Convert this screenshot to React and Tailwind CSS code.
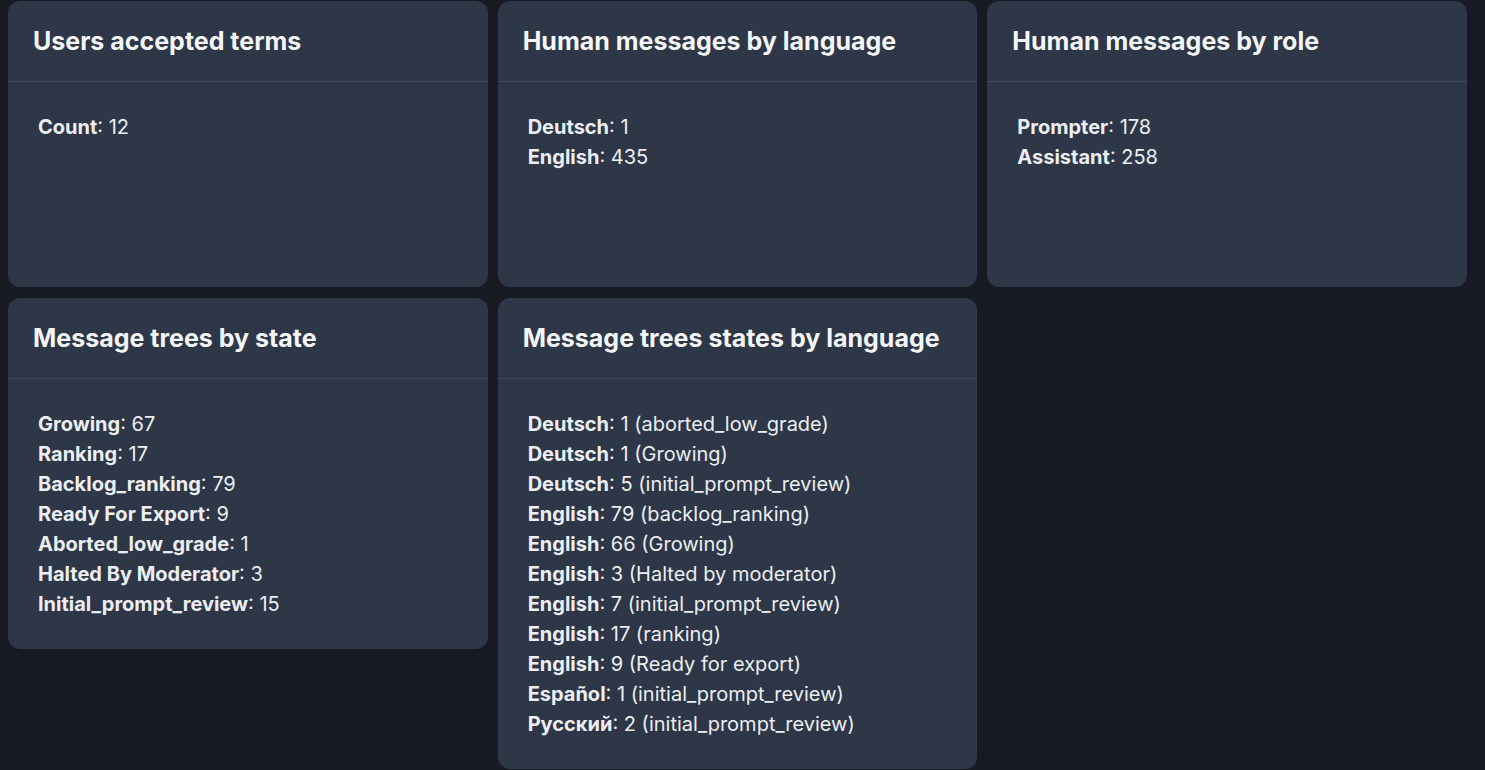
import React from "react"

const cards = [
  {
    title: "Users accepted terms",
    rows: [["Count", "12"]],
  },
  {
    title: "Human messages by language",
    rows: [
      ["Deutsch", "1"],
      ["English", "435"],
    ],
  },
  {
    title: "Human messages by role",
    rows: [
      ["Prompter", "178"],
      ["Assistant", "258"],
    ],
  },
  {
    title: "Message trees by state",
    rows: [
      ["Growing", "67"],
      ["Ranking", "17"],
      ["Backlog_ranking", "79"],
      ["Ready For Export", "9"],
      ["Aborted_low_grade", "1"],
      ["Halted By Moderator", "3"],
      ["Initial_prompt_review", "15"],
    ],
  },
  {
    title: "Message trees states by language",
    rows: [
      ["Deutsch", "1 (aborted_low_grade)"],
      ["Deutsch", "1 (Growing)"],
      ["Deutsch", "5 (initial_prompt_review)"],
      ["English", "79 (backlog_ranking)"],
      ["English", "66 (Growing)"],
      ["English", "3 (Halted by moderator)"],
      ["English", "7 (initial_prompt_review)"],
      ["English", "17 (ranking)"],
      ["English", "9 (Ready for export)"],
      ["Español", "1 (initial_prompt_review)"],
      ["Русский", "2 (initial_prompt_review)"],
    ],
  },
]

function StatCard({ title, rows, tall }) {
  return (
    <div className={"bg-[#2d3748] rounded-xl flex flex-col " + (tall ? "h-[286px]" : "")}>
      <div className="pl-[25px] pr-6 pt-6 pb-6 border-b border-[#404a5a]">
        <h2 className="text-[25px] leading-8 font-bold text-[#f4f5f7]">{title}</h2>
      </div>
      <div className="px-[30px] pt-[30px] pb-[30px]">
        {rows.map(([label, value], i) => (
          <p key={i} className="text-xl leading-[30px] text-[#eceef1]">
            <span className="font-bold">{label}</span>: {value}
          </p>
        ))}
      </div>
    </div>
  )
}

export default function App() {
  return (
    <div
      className="min-h-screen bg-[#171923] pl-2 pt-px"
      style={{ fontFamily: "Inter, 'Noto Sans', sans-serif" }}
    >
      <div className="w-[1459px] grid grid-cols-3 gap-x-[10px] gap-y-[11px] items-start">
        {cards.map((c, i) => (
          <StatCard key={i} title={c.title} rows={c.rows} tall={i < 3} />
        ))}
      </div>
    </div>
  )
}
